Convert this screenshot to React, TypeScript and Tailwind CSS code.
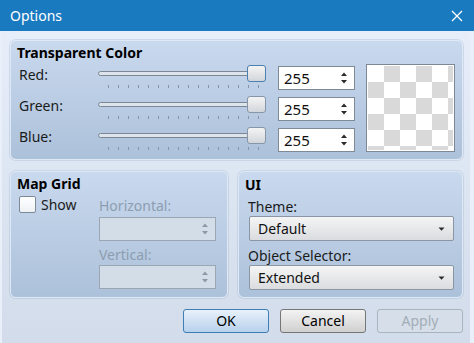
import React from "react";

const font = { fontFamily: '"Noto Sans", "Open Sans", sans-serif' };

function Arrows({ disabled }: { disabled?: boolean }) {
    const c = disabled ? "#8d99a6" : "#2b2b2b";
    return (
        <svg width="8" height="14" viewBox="0 0 8 14" className="mr-[6px]">
            <path d="M4 1.5 L7 5 L1 5 Z" fill={c} />
            <path d="M4 12.5 L7 9 L1 9 Z" fill={c} />
        </svg>
    );
}

function SpinBox({ value, disabled, className }: { value?: string; disabled?: boolean; className: string }) {
    return (
        <div
            className={`flex items-center justify-between border ${
                disabled ? "border-[#9aa6b3] bg-[#d3dde8]" : "border-[#7f8a97] bg-white"
            } ${className}`}
        >
            <span className="pl-[5px] text-[15px] leading-none text-[#111]">{value}</span>
            <Arrows disabled={disabled} />
        </div>
    );
}

function Slider({ focused }: { focused?: boolean }) {
    return (
        <div className="relative h-[26px] w-[168px]">
            <div className="absolute left-0 right-[4px] top-[7px] h-[5px] rounded-full border border-[#7c8794] bg-[#dde4ec]" />
            <div
                className={`absolute right-0 top-[1px] h-[17px] w-[19px] rounded-[3px] border bg-gradient-to-b from-[#f4f4f4] to-[#d2d6db] ${
                    focused ? "border-[#4a7fb0]" : "border-[#8696a8]"
                }`}
            />
            <div className="absolute left-[10px] top-[21px] flex gap-[9px]">
                {Array.from({ length: 16 }).map((_, i) => (
                    <div key={i} className="h-[3px] w-[1px] bg-[#8594a6]" />
                ))}
            </div>
        </div>
    );
}

function Select({ value }: { value: string }) {
    return (
        <div className="ml-[1px] flex h-[25px] w-[205px] items-center justify-between rounded-[2px] border border-[#8a96a3] bg-gradient-to-b from-[#f5f5f5] to-[#dadcdf]">
            <span className="pl-[8px] text-[14px] leading-none text-[#111]">{value}</span>
            <svg width="7" height="4" viewBox="0 0 7 4" className="mr-[8px]">
                <path d="M0.5 0.5 L6.5 0.5 L3.5 3.8 Z" fill="#2b2b2b" />
            </svg>
        </div>
    );
}

const group =
    "rounded-[6px] border border-[#dfe9f6] bg-gradient-to-b from-[#c9d9ee] to-[#acc1da] shadow-[0_0_0_1px_rgba(160,180,205,0.35)]";

export default function App() {
    const rows = [
        { label: "Red:", focused: true },
        { label: "Green:" },
        { label: "Blue:" },
    ];

    return (
        <div className="flex h-[343px] w-[474px] flex-col overflow-hidden" style={font}>
            {/* Title bar */}
            <div className="flex h-[31px] items-center justify-between bg-[#1a7ac0] pl-[10px] pr-[11px]">
                <span className="text-[14px] text-white">Options</span>
                <svg width="12" height="12" viewBox="0 0 12 12">
                    <path d="M1 1 L11 11 M11 1 L1 11" stroke="white" strokeWidth="1.3" />
                </svg>
            </div>

            {/* Body */}
            <div className="flex flex-1 flex-col border-l-[2px] border-r-[4px] border-[#e9f0f9] bg-gradient-to-b from-[#e6eefa] to-[#d2dcea] pl-[8px] pr-[7px] pt-[9px]">
                {/* Transparent Color */}
                <div className={`${group} h-[120px] pl-[5px] pt-[2px]`}>
                    <div className="h-[21px] pl-[1px] text-[14px] font-bold leading-[20px] text-black">
                        Transparent Color
                    </div>
                    <div className="flex">
                        <div className="flex flex-col">
                            {rows.map((r) => (
                                <div key={r.label} className="flex h-[31px] items-start">
                                    <div className="mt-[2px] w-[82px] pl-[3px] text-[14px] leading-[18px] text-[#1a1a1a]">
                                        {r.label}
                                    </div>
                                    <Slider focused={r.focused} />
                                    <SpinBox value="255" className="ml-[12px] mt-[2px] h-[24px] w-[77px]" />
                                </div>
                            ))}
                        </div>
                        <div className="ml-[11px] h-[88px] w-[89px] border border-[#7d8896] bg-white p-[1px]">
                            <div className="h-full w-full bg-[conic-gradient(#d9d9d9_25%,#ffffff_0_50%,#d9d9d9_0_75%,#ffffff_0)] bg-[length:32px_32px]" />
                        </div>
                    </div>
                </div>

                {/* Map Grid + UI */}
                <div className="mt-[11px] flex gap-[10px]">
                    <div className={`${group} h-[127px] w-[218px] pl-[5px] pt-[2px]`}>
                        <div className="h-[21px] pl-[1px] text-[14px] font-bold leading-[20px] text-black">
                            Map Grid
                        </div>
                        <div className="flex">
                            <div className="flex w-[83px] items-start pl-[3px] pt-[1px]">
                                <div className="h-[17px] w-[17px] rounded-[2px] border border-[#7f8a97] bg-gradient-to-b from-white to-[#eef1f5]" />
                                <span className="ml-[5px] text-[14px] leading-[17px] text-[#1a1a1a]">Show</span>
                            </div>
                            <div className="flex flex-col">
                                <div className="mt-[2px] text-[14px] leading-[18px] text-[#8d9db0]">Horizontal:</div>
                                <SpinBox disabled className="mt-[2px] h-[24px] w-[117px]" />
                                <div className="mt-[5px] text-[14px] leading-[17px] text-[#8d9db0]">Vertical:</div>
                                <SpinBox disabled className="mt-[2px] h-[24px] w-[117px]" />
                            </div>
                        </div>
                    </div>

                    <div className={`${group} h-[127px] w-[225px] pl-[6px] pt-[3px]`}>
                        <div className="h-[20px] text-[14px] font-bold leading-[20px] text-black">UI</div>
                        <div className="pl-[3px]">
                            <div className="mt-[2px] text-[14px] leading-[19px] text-[#1a1a1a]">Theme:</div>
                            <Select value="Default" />
                            <div className="mt-[5px] text-[14px] leading-[19px] text-[#1a1a1a]">Object Selector:</div>
                            <Select value="Extended" />
                        </div>
                    </div>
                </div>

                {/* Buttons */}
                <div className="mt-[11px] flex justify-end gap-[11px]">
                    <button className="h-[24px] w-[86px] rounded-[3px] border border-[#3d7fb3] bg-gradient-to-b from-[#e8f1fb] to-[#b8d1ec] text-[14px] leading-none text-black">
                        OK
                    </button>
                    <button className="h-[24px] w-[86px] rounded-[3px] border border-[#767676] bg-gradient-to-b from-[#f3f3f3] to-[#d0d0d0] text-[14px] leading-none text-black">
                        Cancel
                    </button>
                    <button className="h-[24px] w-[86px] rounded-[3px] border border-[#a8b3c0] bg-[#d6dfe9] text-[14px] leading-none text-[#a3adb8]">
                        Apply
                    </button>
                </div>
            </div>
        </div>
    );
}
